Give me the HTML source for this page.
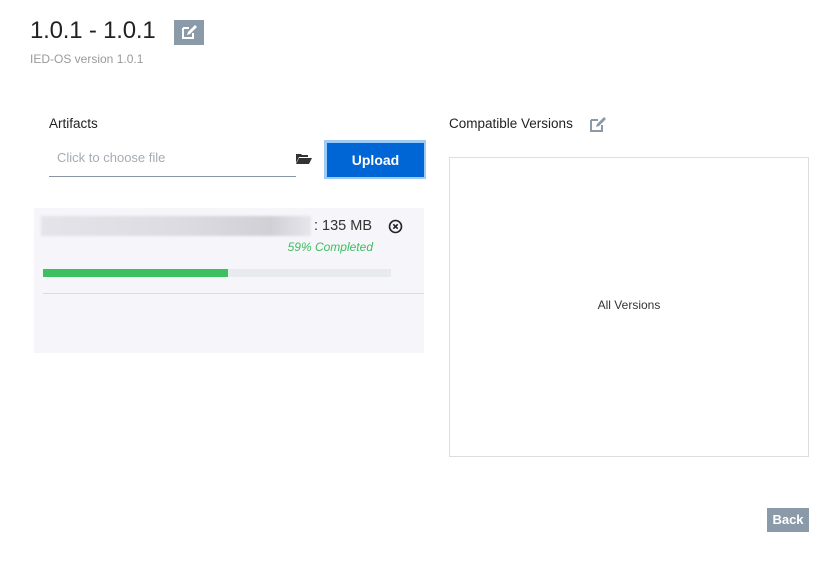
<!DOCTYPE html>
<html><head><style>
body{margin:0;width:831px;height:563px;background:#fff;font-family:"Liberation Sans",sans-serif;position:relative;overflow:hidden}
.a{position:absolute}
</style></head><body>
<div class="a" style="left:30px;top:17px;font-size:24px;color:#222;letter-spacing:-0.2px">1.0.1 - 1.0.1</div>
<div class="a" style="left:174px;top:20px;width:30px;height:25px;background:#8a9aa8">
<svg width="30" height="25" viewBox="0 0 30 25"><path d="M9 8h6M9 8v10h10v-5" stroke="#fff" stroke-width="2" fill="none"/><path d="M13 15l1-3 7-7 2 2-7 7z" fill="#fff"/></svg></div>
<div class="a" style="left:30px;top:52px;font-size:12px;color:#9a9a9a">IED-OS version 1.0.1</div>

<div class="a" style="left:49px;top:116px;font-size:13.5px;color:#222">Artifacts</div>
<div class="a" style="left:49px;top:176px;width:247px;height:1px;background:#8896a3"></div>
<div class="a" style="left:57px;top:150px;font-size:13px;color:#a5acb3">Click to choose file</div>
<svg class="a" style="left:296px;top:153px" width="16" height="12" viewBox="0 0 16 12"><path d="M0 1h5l1 1h6v2H3L0 10z" fill="#333"/><path d="M3 5h13l-3 6H0z" fill="#333"/></svg>
<div class="a" style="left:324px;top:140px;width:102px;height:39px;background:#9ccbf8"></div>
<div class="a" style="left:327px;top:143px;width:97px;height:34px;background:#0066d6;color:#fff;font-weight:bold;font-size:14px;text-align:center;line-height:34px">Upload</div>

<div class="a" style="left:34px;top:208px;width:390px;height:145px;background:#f5f5fa"></div>
<div class="a" style="left:41px;top:216px;width:270px;height:20px;background:linear-gradient(90deg,#e4e4ea,#dcdce2 50%,#d0d0d6 85%,#e6e6ec);filter:blur(1px)"></div>
<div class="a" style="left:314px;top:218px;font-size:14.5px;color:#333">: 135 MB</div>
<svg class="a" style="left:388px;top:219px" width="15" height="15" viewBox="0 0 15 15"><circle cx="7.5" cy="7.5" r="6" stroke="#222" stroke-width="1.6" fill="none"/><path d="M5.3 5.3l4.4 4.4M9.7 5.3l-4.4 4.4" stroke="#222" stroke-width="1.6"/></svg>
<div class="a" style="left:260px;top:240px;width:113px;text-align:right;font-size:12px;font-style:italic;color:#3cbf5e">59% Completed</div>
<div class="a" style="left:43px;top:269px;width:348px;height:8px;background:#e8ebee"></div>
<div class="a" style="left:43px;top:269px;width:185px;height:8px;background:#3cbf5e"></div>
<div class="a" style="left:43px;top:293px;width:381px;height:1px;background:#dcdce0"></div>

<div class="a" style="left:449px;top:116px;font-size:13.5px;color:#222">Compatible Versions</div>
<svg class="a" style="left:590px;top:117px" width="17" height="15" viewBox="0 0 17 15"><path d="M1 3h7M1 3v11h11v-6" stroke="#8a9aa8" stroke-width="2" fill="none"/><path d="M6 10l1-3 7-7 2 2-7 7z" fill="#8a9aa8"/></svg>
<div class="a" style="left:449px;top:157px;width:358px;height:298px;border:1px solid #ddd"></div>
<div class="a" style="left:449px;top:298px;width:360px;text-align:center;font-size:12px;color:#333">All Versions</div>
<div class="a" style="left:767px;top:508px;width:42px;height:24px;background:#8a9aa8;color:#fff;font-weight:bold;font-size:13px;text-align:center;line-height:24px">Back</div>
</body></html>
